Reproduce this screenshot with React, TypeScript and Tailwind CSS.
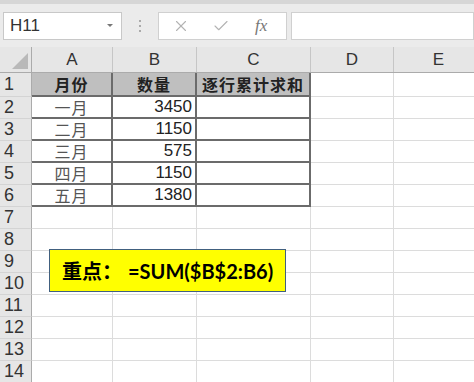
import { X, Check } from 'lucide-react';

const cols = [
  { key: 'A', w: 'w-[81px]' },
  { key: 'B', w: 'w-[84px]' },
  { key: 'C', w: 'w-[114px]' },
  { key: 'D', w: 'w-[83px]' },
  { key: 'E', w: 'w-[90px]' },
];

const data = [
  { m: '一月', v: '3450' },
  { m: '二月', v: '1150' },
  { m: '三月', v: '575' },
  { m: '四月', v: '1150' },
  { m: '五月', v: '1380' },
];

const cjk = "font-['Noto_Sans_CJK_SC',sans-serif]";

export default function App() {
  const rows = Array.from({ length: 14 }, (_, i) => i + 1);

  return (
    <div className="w-[474px] h-[382px] overflow-hidden bg-white font-['Liberation_Sans',Arial,sans-serif] relative">
      {/* Formula bar */}
      <div className="h-[47px] bg-[#ebebeb] border-t-[4px] border-[#d6d6d6] flex items-center pl-[3px]">
        <div className="w-[119px] h-[28px] bg-white border border-[#c8c8c8] flex items-center justify-between pl-[6px] pr-[8px]">
          <span className="text-[17px] text-[#333]">H11</span>
          <span className="w-0 h-0 border-l-[3px] border-r-[3px] border-t-[3px] border-l-transparent border-r-transparent border-t-[#777]" />
        </div>
        <div className="w-[36px] flex flex-col items-center gap-[3px]">
          <span className="w-[2px] h-[2px] bg-[#aaa]" />
          <span className="w-[2px] h-[2px] bg-[#aaa]" />
          <span className="w-[2px] h-[2px] bg-[#aaa]" />
        </div>
        <div className="w-[129px] h-[28px] bg-white border border-[#d0d0d0] flex items-center">
          <X className="w-[18px] h-[18px] ml-[13px] text-[#b3b3b3]" strokeWidth={1.5} />
          <Check className="w-[18px] h-[18px] ml-[22px] text-[#b3b3b3]" strokeWidth={1.5} />
          <span className="ml-[25px] text-[17px] italic text-[#777] font-['Liberation_Serif',serif]">fx</span>
        </div>
        <div className="ml-[4px] flex-1 h-[28px] bg-white border border-[#d0d0d0]" />
      </div>

      {/* Column headers */}
      <div className="flex h-[26px] bg-[#e6e6e6] border-b border-[#ababab]">
        <div className="w-[32px] shrink-0 border-r border-[#ababab] flex items-end justify-end pr-[3px] pb-[3px]">
          <svg width="16" height="16" viewBox="0 0 16 16">
            <polygon points="16,0 16,16 0,16" fill="#b9b9b9" />
          </svg>
        </div>
        {cols.map((c) => (
          <div
            key={c.key}
            className={`${c.w} shrink-0 border-r border-[#c6c6c6] flex items-center justify-center text-[17px] text-[#333]`}
          >
            {c.key}
          </div>
        ))}
      </div>

      {/* Rows */}
      {rows.map((r) => {
        const h = r === 1 ? 'h-[24px]' : 'h-[22px]';
        const inTable = r <= 6;
        const item = r >= 2 && r <= 6 ? data[r - 2] : null;
        const tableCell = `border-r-2 border-r-[#6b6b6b] border-b-2 border-b-[#6b6b6b] ${r === 1 ? 'bg-[#bfbfbf]' : ''}`;
        const plainCell = 'border-r border-r-[#dcdcdc] border-b border-b-[#dcdcdc]';
        return (
          <div key={r} className={`flex ${h}`}>
            <div className="w-[32px] shrink-0 bg-[#e6e6e6] border-r border-[#ababab] border-b border-b-[#d4d4d4] flex items-center pl-[4px] text-[18px] text-[#333]">
              {r}
            </div>
            {/* A */}
            <div className={`w-[81px] shrink-0 flex items-center justify-center ${inTable ? tableCell : plainCell}`}>
              {r === 1 && <span className={`${cjk} font-bold text-[16px] text-[#222] tracking-[1px]`}>月份</span>}
              {item && <span className={`${cjk} text-[16px] text-[#555] tracking-[1px]`}>{item.m}</span>}
            </div>
            {/* B */}
            <div
              className={`w-[84px] shrink-0 flex items-center ${r === 1 ? 'justify-center' : 'justify-end pr-[3px]'} ${
                inTable ? tableCell : plainCell
              }`}
            >
              {r === 1 && <span className={`${cjk} font-bold text-[16px] text-[#222] tracking-[1px]`}>数量</span>}
              {item && <span className="text-[17px] text-[#222]">{item.v}</span>}
            </div>
            {/* C */}
            <div className={`w-[114px] shrink-0 flex items-center justify-center ${inTable ? tableCell : plainCell}`}>
              {r === 1 && <span className={`${cjk} font-bold text-[16px] text-[#222] tracking-[1px]`}>逐行累计求和</span>}
            </div>
            <div className={`w-[83px] shrink-0 ${plainCell}`} />
            <div className={`w-[90px] shrink-0 ${plainCell}`} />
          </div>
        );
      })}

      {/* Floating text box */}
      <div className="absolute left-[49px] top-[249px] w-[237px] h-[43px] bg-[#ffff00] border border-[#41607f] flex items-center pl-[12px]">
        <span className={`${cjk} font-bold text-[20px] text-black`}>重点：</span>
        <span className="font-['Lato',sans-serif] font-bold text-[20px] text-black ml-[6px]">=SUM($B$2:B6)</span>
      </div>
    </div>
  );
}
